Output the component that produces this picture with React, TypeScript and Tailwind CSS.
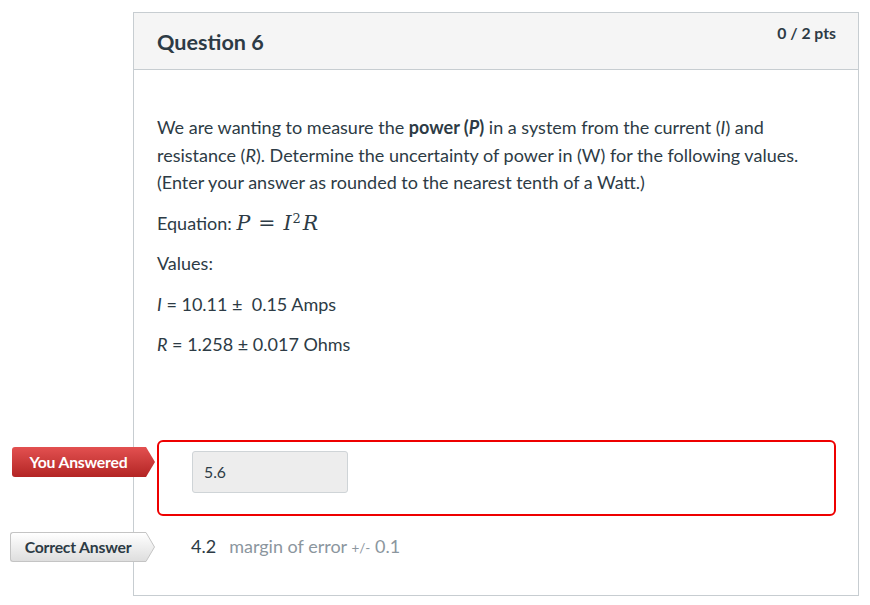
import React from "react";

function Label({ text, variant }: { text: string; variant: "red" | "gray" }) {
  const red = variant === "red";
  return (
    <div className="flex h-[30px] items-stretch">
      <div
        className={
          red
            ? "flex w-[133px] items-center justify-center rounded-l-[3px] bg-gradient-to-b from-[#e35050] to-[#b32424] text-[15.75px] font-bold tracking-[-0.2px] text-white"
            : "flex w-[135px] items-center justify-center rounded-l-[3px] border border-r-0 border-[#c4c4c4] bg-gradient-to-b from-[#ffffff] to-[#dedede] text-[15.75px] font-bold tracking-[-0.2px] text-[#2d3b45]"
        }
      >
        {text}
      </div>
      <svg width="10" height="30" viewBox="0 0 10 30" className="block">
        <defs>
          <linearGradient id={"g" + variant} x1="0" y1="0" x2="0" y2="1">
            <stop offset="0" stopColor={red ? "#e35050" : "#ffffff"} />
            <stop offset="1" stopColor={red ? "#b32424" : "#dedede"} />
          </linearGradient>
        </defs>
        {red ? (
          <polygon points="0,0 1,0 10,15 1,30 0,30" fill={"url(#g" + variant + ")"} />
        ) : (
          <>
            <polygon points="0,0.5 1,0.5 9.5,15 1,29.5 0,29.5" fill={"url(#g" + variant + ")"} />
            <polyline points="0,0.5 1,0.5 9.5,15 1,29.5 0,29.5" fill="none" stroke="#c4c4c4" strokeWidth="1" />
          </>
        )}
      </svg>
    </div>
  );
}

export default function App() {
  return (
    <div
      className="min-h-[605px] bg-white pl-[133px] pt-[12px] text-[#2d3b45]"
      style={{ fontFamily: "Lato, 'Open Sans', sans-serif" }}
    >
      <div className="w-[726px] border border-[#c7cdd1]">
        <div className="flex h-[57px] justify-between border-b border-[#c7cdd1] bg-[#f5f5f5] pl-[23px] pr-[22px]">
          <div className="pt-[14px] text-[21.6px] font-bold leading-[30px]">Question 6</div>
          <div className="pt-[10px] text-[15.75px] font-bold leading-[20px]">0 / 2 pts</div>
        </div>
        <div className="px-[23px] pt-[44px] text-[18px] leading-[27.5px]">
          <p className="mb-[13px]">
            We are wanting to measure the <b>power (<i>P</i>)</b> in a system from the current (<i>I</i>) and
            resistance (<i>R</i>). Determine the uncertainty of power in (W) for the following values.
            (Enter your answer as rounded to the nearest tenth of a Watt.)
          </p>
          <p className="mb-[13px]">
            Equation:{" "}
            <span
              className="text-[20.5px] leading-[20px]"
              style={{ fontFamily: "'DejaVu Serif', 'Liberation Serif', serif" }}
            >
              <i>P</i>
              <span className="mx-[8px] font-light">=</span>
              <i>I</i>
              <sup className="ml-[1px] text-[13px]">2</sup>
              <i className="ml-[2px]">R</i>
            </span>
          </p>
          <p className="mb-[13px]">Values:</p>
          <p className="mb-[13px]">
            <i>I</i> = 10.11 ±&nbsp; 0.15 Amps
          </p>
          <p className="mb-[13px]">
            <i>R</i> = 1.258 ± 0.017 Ohms
          </p>
        </div>
        <div className="relative mt-[81px] pl-[23px]">
          <div className="absolute left-[-122px] top-[7px]">
            <Label text="You Answered" variant="red" />
          </div>
          <div className="h-[76px] w-[679px] rounded-[6px] border-2 border-[#ee0000] pl-[33px] pt-[9px]">
            <div className="flex h-[42px] w-[156px] items-center rounded-[3px] border border-[#cfd4d7] bg-[#ededed] pl-[11px] text-[15.75px]">
              5.6
            </div>
          </div>
        </div>
        <div className="relative mt-[16px] flex h-[30px] items-center pl-[57px] text-[18px]">
          <div className="absolute left-[-124px] top-0">
            <Label text="Correct Answer" variant="gray" />
          </div>
          <span>4.2</span>
          <span className="ml-[13px] text-[#8b969e]">
            margin of error <span className="text-[13.5px]">+/-</span> 0.1
          </span>
        </div>
        <div className="h-[33px]" />
      </div>
    </div>
  );
}
